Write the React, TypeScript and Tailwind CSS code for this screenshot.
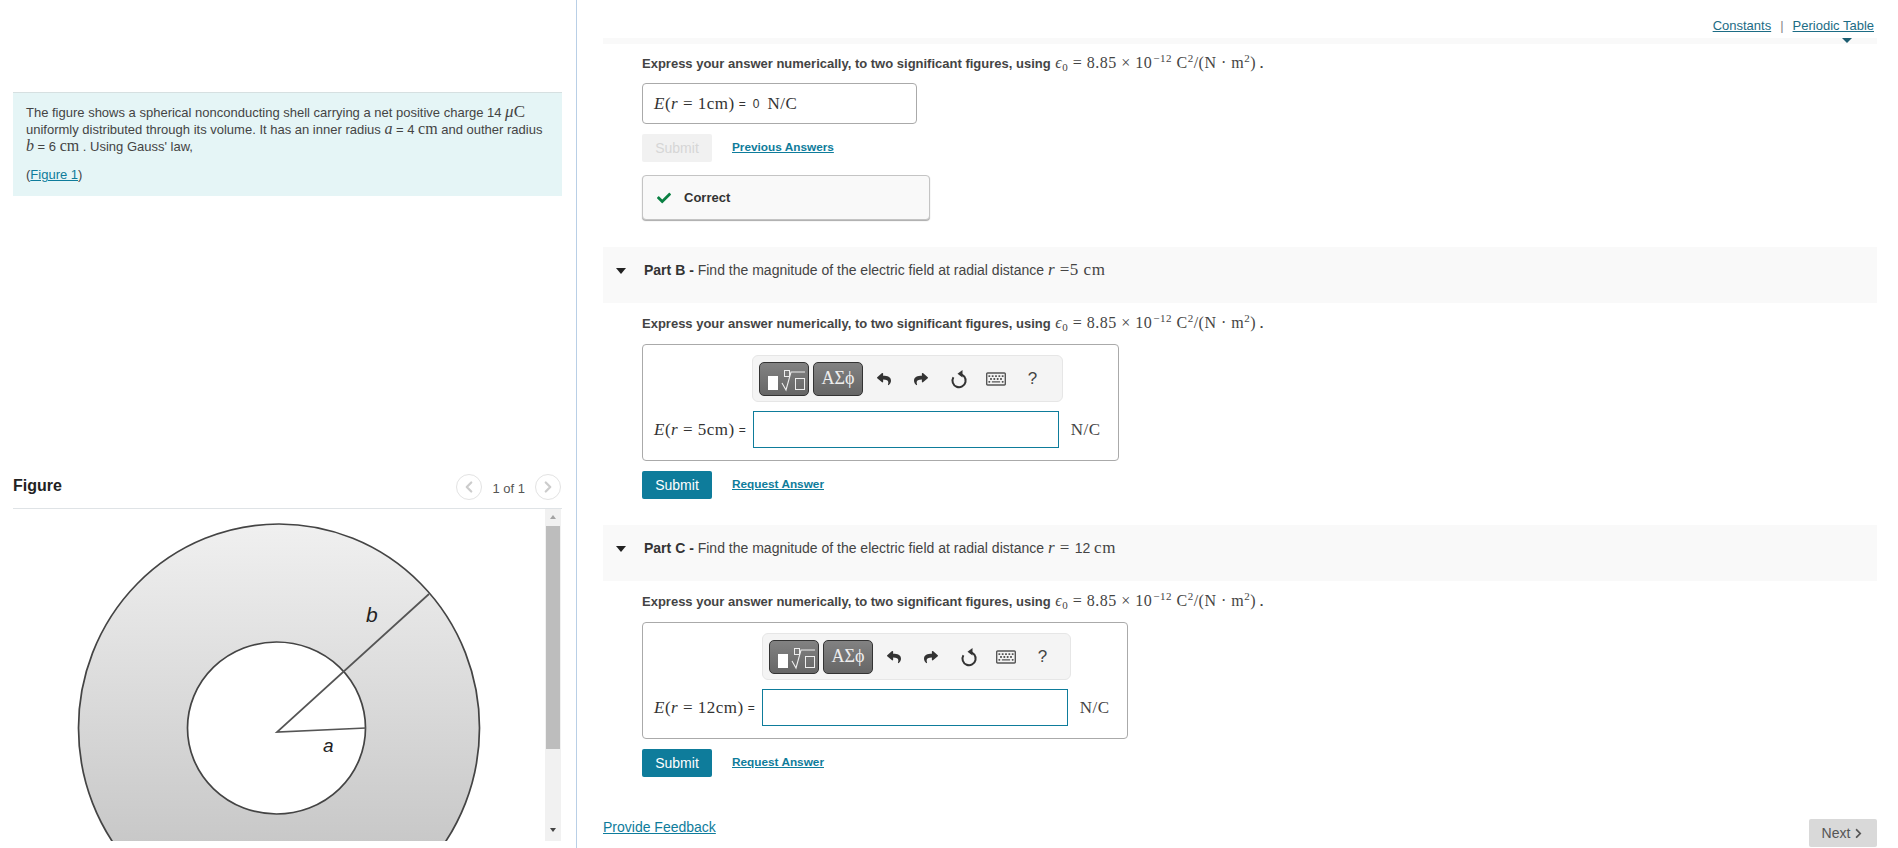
import { ChevronLeft, ChevronRight } from 'lucide-react';
import { FaCheck, FaChevronRight, FaRegKeyboard, FaReply, FaShare } from 'react-icons/fa';

const M = ({ children, className = '' }: { children: React.ReactNode; className?: string }) => (
  <span className={`font-['Liberation_Serif',serif] text-[16px] ${className}`}>{children}</span>
);

const Express = ({ className = '' }: { className?: string }) => (
  <p className={`h-[20px] leading-[20px] text-[13px] font-bold text-[#444] whitespace-nowrap ${className}`}>
    Express your answer numerically, to two significant figures, using{' '}
    <M className="font-normal ml-[1px] tracking-[0.5px]">
      <i>ϵ</i>
      <span className="text-[11px] relative top-[3px]">0</span> = 8.85 × 10
      <span className="text-[11px] relative -top-[6px] ml-[1px]">−12</span> C
      <span className="text-[11px] relative -top-[6px]">2</span>/(N · m
      <span className="text-[11px] relative -top-[6px]">2</span>)
    </M>{' '}
    .
  </p>
);

const PartHeader = ({ part, children }: { part: string; children: React.ReactNode }) => (
  <div className="flex h-[56px] pt-[11px] bg-[#f9f9f9] items-start">
    <div className="ml-[13px] mt-[10px] w-0 h-0 border-x-[5.5px] border-x-transparent border-t-[6px] border-t-[#222]" />
    <p className="ml-[18px] h-[24px] leading-[24px] text-[14px] text-[#444] whitespace-nowrap">
      <b className="text-[#333]">Part {part} -</b> Find the magnitude of the electric field at radial distance {children}
    </p>
  </div>
);

const TemplateIcon = () => (
  <svg width="49" height="34" viewBox="0 0 49 34" fill="none">
    <rect x="8" y="13" width="10" height="14" fill="#fff" />
    <rect x="24.5" y="7.5" width="5" height="6" stroke="#eee" strokeWidth="1" />
    <path d="M22 20 L26 27 L31 9 H45" stroke="#eee" strokeWidth="1.1" />
    <rect x="35.5" y="15.5" width="9" height="11" stroke="#eee" strokeWidth="1" />
  </svg>
);

const ReloadIcon = () => (
  <svg width="18" height="20" viewBox="0 0 18 20" fill="none">
    <path d="M9.5 5 A6.6 6.6 0 1 1 3.4 8.2" stroke="#333" strokeWidth="2" />
    <path d="M7.5 4.7 L12.5 1 V8.5 Z" fill="#333" />
  </svg>
);

const Toolbar = ({ className = '' }: { className?: string }) => (
  <div className={`flex items-center h-[47px] pl-[6px] rounded-md bg-[#f4f4f4] border border-[#e6e6e6] ${className}`}>
    <div className="w-[50px] h-[34px] rounded-[5px] border border-[#333] bg-gradient-to-b from-[#828282] to-[#666] overflow-hidden">
      <TemplateIcon />
    </div>
    <div className="ml-[4px] w-[50px] h-[34px] rounded-[5px] border border-[#333] bg-gradient-to-b from-[#828282] to-[#666] flex items-center justify-center font-['Liberation_Serif',serif] text-[18px] text-[#eee]">
      ΑΣϕ
    </div>
    <div className="flex items-center ml-[2px] text-[#333]">
      <div className="w-[37px] flex justify-center"><FaReply size={14} /></div>
      <div className="w-[38px] flex justify-center"><FaShare size={14} /></div>
      <div className="w-[37px] flex justify-center"><ReloadIcon /></div>
      <div className="w-[37px] flex justify-center"><FaRegKeyboard size={20} className="text-[#555]" /></div>
      <div className="w-[37px] flex justify-center text-[17px] text-[#444]">?</div>
    </div>
  </div>
);

const AnswerBox = ({ value, toolbarClass }: { value: string; toolbarClass: string }) => (
  <div className="w-fit h-[117px] border border-[#aaa] rounded-[4px] pl-[11px] pr-[17px] pt-[10px]">
    <Toolbar className={toolbarClass} />
    <div className="flex items-center mt-[9px] h-[37px]">
      <M className="text-[#333] text-[17px] tracking-[0.5px] whitespace-nowrap">
        <i>E</i>(<i>r</i> = {value}cm)
      </M>
      <span className="ml-[4px] text-[12px] text-[#333]">=</span>
      <div className="ml-[7px] w-[306px] h-[37px] border border-[#0e7c9b] bg-white" />
      <M className="ml-[12px] text-[#444] text-[17px] tracking-[0.5px]">N/C</M>
    </div>
  </div>
);

const Actions = ({ link, disabled = false }: { link: string; disabled?: boolean }) => (
  <div className="flex items-center mt-[10px] h-[28px]">
    <button
      className={
        disabled
          ? 'w-[70px] h-[28px] rounded-[2px] bg-[#f1f1f1] text-[#d6d6d6] text-[14px]'
          : 'w-[70px] h-[28px] rounded-[2px] bg-[#0e7c9b] text-white text-[14px]'
      }
    >
      Submit
    </button>
    <a className="ml-[20px] -mt-[1px] text-[11.8px] font-bold text-[#0e7c9b] underline">{link}</a>
  </div>
);

const Figure = () => (
  <svg width="532" height="332" viewBox="13 509 532 332" className="block">
    <defs>
      <linearGradient id="shell" x1="0" y1="0" x2="0" y2="1">
        <stop offset="0" stopColor="#f0f0f0" />
        <stop offset="1" stopColor="#bdbdbd" />
      </linearGradient>
    </defs>
    <ellipse cx="279" cy="728" rx="200.5" ry="204" fill="url(#shell)" stroke="#444" strokeWidth="1.7" />
    <ellipse cx="276.5" cy="728" rx="89" ry="86" fill="#fff" stroke="#444" strokeWidth="1.7" />
    <path d="M429 594 L277 732 L366 728" fill="none" stroke="#555" strokeWidth="1.7" />
    <text x="366" y="622" fontSize="21" fontStyle="italic" fontFamily="'Liberation Sans', sans-serif" fill="#222">
      b
    </text>
    <text x="323" y="752" fontSize="19" fontStyle="italic" fontFamily="'Liberation Sans', sans-serif" fill="#222">
      a
    </text>
  </svg>
);

const App = () => {
  return (
    <div className="flex w-[1898px] h-[848px] overflow-hidden bg-white font-['Liberation_Sans',Arial,sans-serif]">
      {/* left panel */}
      <div className="w-[577px] shrink-0 border-r border-[#b9cfe6] pt-[92px] pl-[13px] pr-[14px]">
        <div className="h-[104px] bg-[#e5f5f6] border-t border-[#d6e0e1] px-[13px] pt-[11px] text-[13px] leading-[16px] text-[#444]">
          <p className="whitespace-nowrap">
            The figure shows a spherical nonconducting shell carrying a net positive charge 14 <M className="text-[17px] leading-[16px]"><i>μ</i>C</M>
            <br />
            uniformly distributed through its volume. It has an inner radius <M className="leading-[16px]"><i>a</i></M> = 4 <M className="leading-[16px]">cm</M> and outher radius
            <br />
            <M className="leading-[16px]"><i>b</i></M> = 6 <M className="leading-[16px]">cm</M> . Using Gauss' law,
          </p>
          <p className="mt-[12px]">
            (<a className="text-[#0e7c9b] underline">Figure 1</a>)
          </p>
        </div>

        <div className="flex items-center justify-between h-[40px] mt-[271px]">
          <h2 className="text-[16px] font-bold text-[#222] -mt-[3px]">Figure</h2>
          <div className="flex items-center text-[13px] text-[#555] mr-[1px]">
            <div className="w-[26px] h-[26px] rounded-full border border-[#e3e3e3] flex items-center justify-center text-[#ccc]">
              <ChevronLeft size={18} strokeWidth={3} />
            </div>
            <span className="mx-[10px] mt-[4px]">1 of 1</span>
            <div className="w-[26px] h-[26px] rounded-full border border-[#e3e3e3] flex items-center justify-center text-[#ccc]">
              <ChevronRight size={18} strokeWidth={3} />
            </div>
          </div>
        </div>

        <div className="flex border-t border-[#dfe3e6] mt-[1px] h-[333px]">
          <Figure />
          <div className="w-[16px] h-[332px] bg-[#f1f1f1] flex flex-col items-center">
            <div className="mt-[6px] w-0 h-0 border-x-[3.5px] border-x-transparent border-b-[4px] border-b-[#a3a3a3]" />
            <div className="mt-[7px] w-[14px] h-[223px] bg-[#bdbdbd]" />
            <div className="mt-[79px] w-0 h-0 border-x-[3.5px] border-x-transparent border-t-[4px] border-t-[#444]" />
          </div>
        </div>
      </div>

      {/* right panel */}
      <div className="flex-1 pl-[26px] pr-[21px]">
        <div className="flex justify-end items-center h-[38px] pt-[13px] pr-[3px] text-[13px] text-[#1c6c85]">
          <a className="underline">Constants</a>
          <span className="mx-[9px] text-[#888]">|</span>
          <a className="underline">Periodic Table</a>
        </div>
        <div className="relative h-[6px] bg-[#f9f9f9]">
          <div className="absolute right-[25px] top-0 w-0 h-0 border-x-[5px] border-x-transparent border-t-[5px] border-t-[#1c5c70]" />
        </div>

        <div className="pl-[39px] pt-[9px]">
          <Express />
          <div className="flex items-center w-[275px] h-[41px] mt-[10px] pl-[11px] border border-[#aaa] rounded-[4px]">
            <M className="text-[#333] text-[17px] tracking-[0.5px]">
              <i>E</i>(<i>r</i> = 1cm)
            </M>
            <span className="ml-[4px] text-[12px] text-[#333]">=</span>
            <span className="ml-[7px] text-[12px] text-[#333]">0</span>
            <M className="ml-[8px] text-[#333] text-[17px] tracking-[0.5px]">N/C</M>
          </div>
          <Actions link="Previous Answers" disabled />
          <div className="flex items-center w-[288px] h-[45px] mt-[13px] pl-[14px] bg-[#f9f9f9] border border-[#c4c4c4] rounded-[4px] shadow-[0_1px_1px_#aaa]">
            <FaCheck size={14} className="text-[#0a8043]" />
            <span className="ml-[13px] text-[13px] font-bold text-[#333]">Correct</span>
          </div>
        </div>

        <div className="mt-[27px]">
          <PartHeader part="B">
            <M className="text-[17px] tracking-[0.5px]"><i>r</i> =5 cm</M>
          </PartHeader>
          <div className="pl-[39px] pt-[10px]">
            <Express />
            <div className="mt-[11px]">
              <AnswerBox value="5" toolbarClass="ml-[98px] w-[311px]" />
            </div>
            <Actions link="Request Answer" />
          </div>
        </div>

        <div className="mt-[26px]">
          <PartHeader part="C">
            <M className="text-[17px] tracking-[0.5px]"><i>r</i> = </M>12 <M className="text-[17px] tracking-[0.5px]">cm</M>
          </PartHeader>
          <div className="pl-[39px] pt-[10px]">
            <Express />
            <div className="mt-[11px]">
              <AnswerBox value="12" toolbarClass="ml-[108px] w-[309px]" />
            </div>
            <Actions link="Request Answer" />
          </div>
        </div>

        <div className="flex justify-between mt-[35px]">
          <a className="text-[14px] text-[#0e7c9b] underline leading-[30px]">Provide Feedback</a>
          <button className="flex items-center justify-center gap-[3px] w-[68px] h-[28px] mt-[7px] rounded-[2px] bg-[#d9d9d9] text-[14px] text-[#555]">
            Next <FaChevronRight size={11} />
          </button>
        </div>
      </div>
    </div>
  );
};

export default App;
